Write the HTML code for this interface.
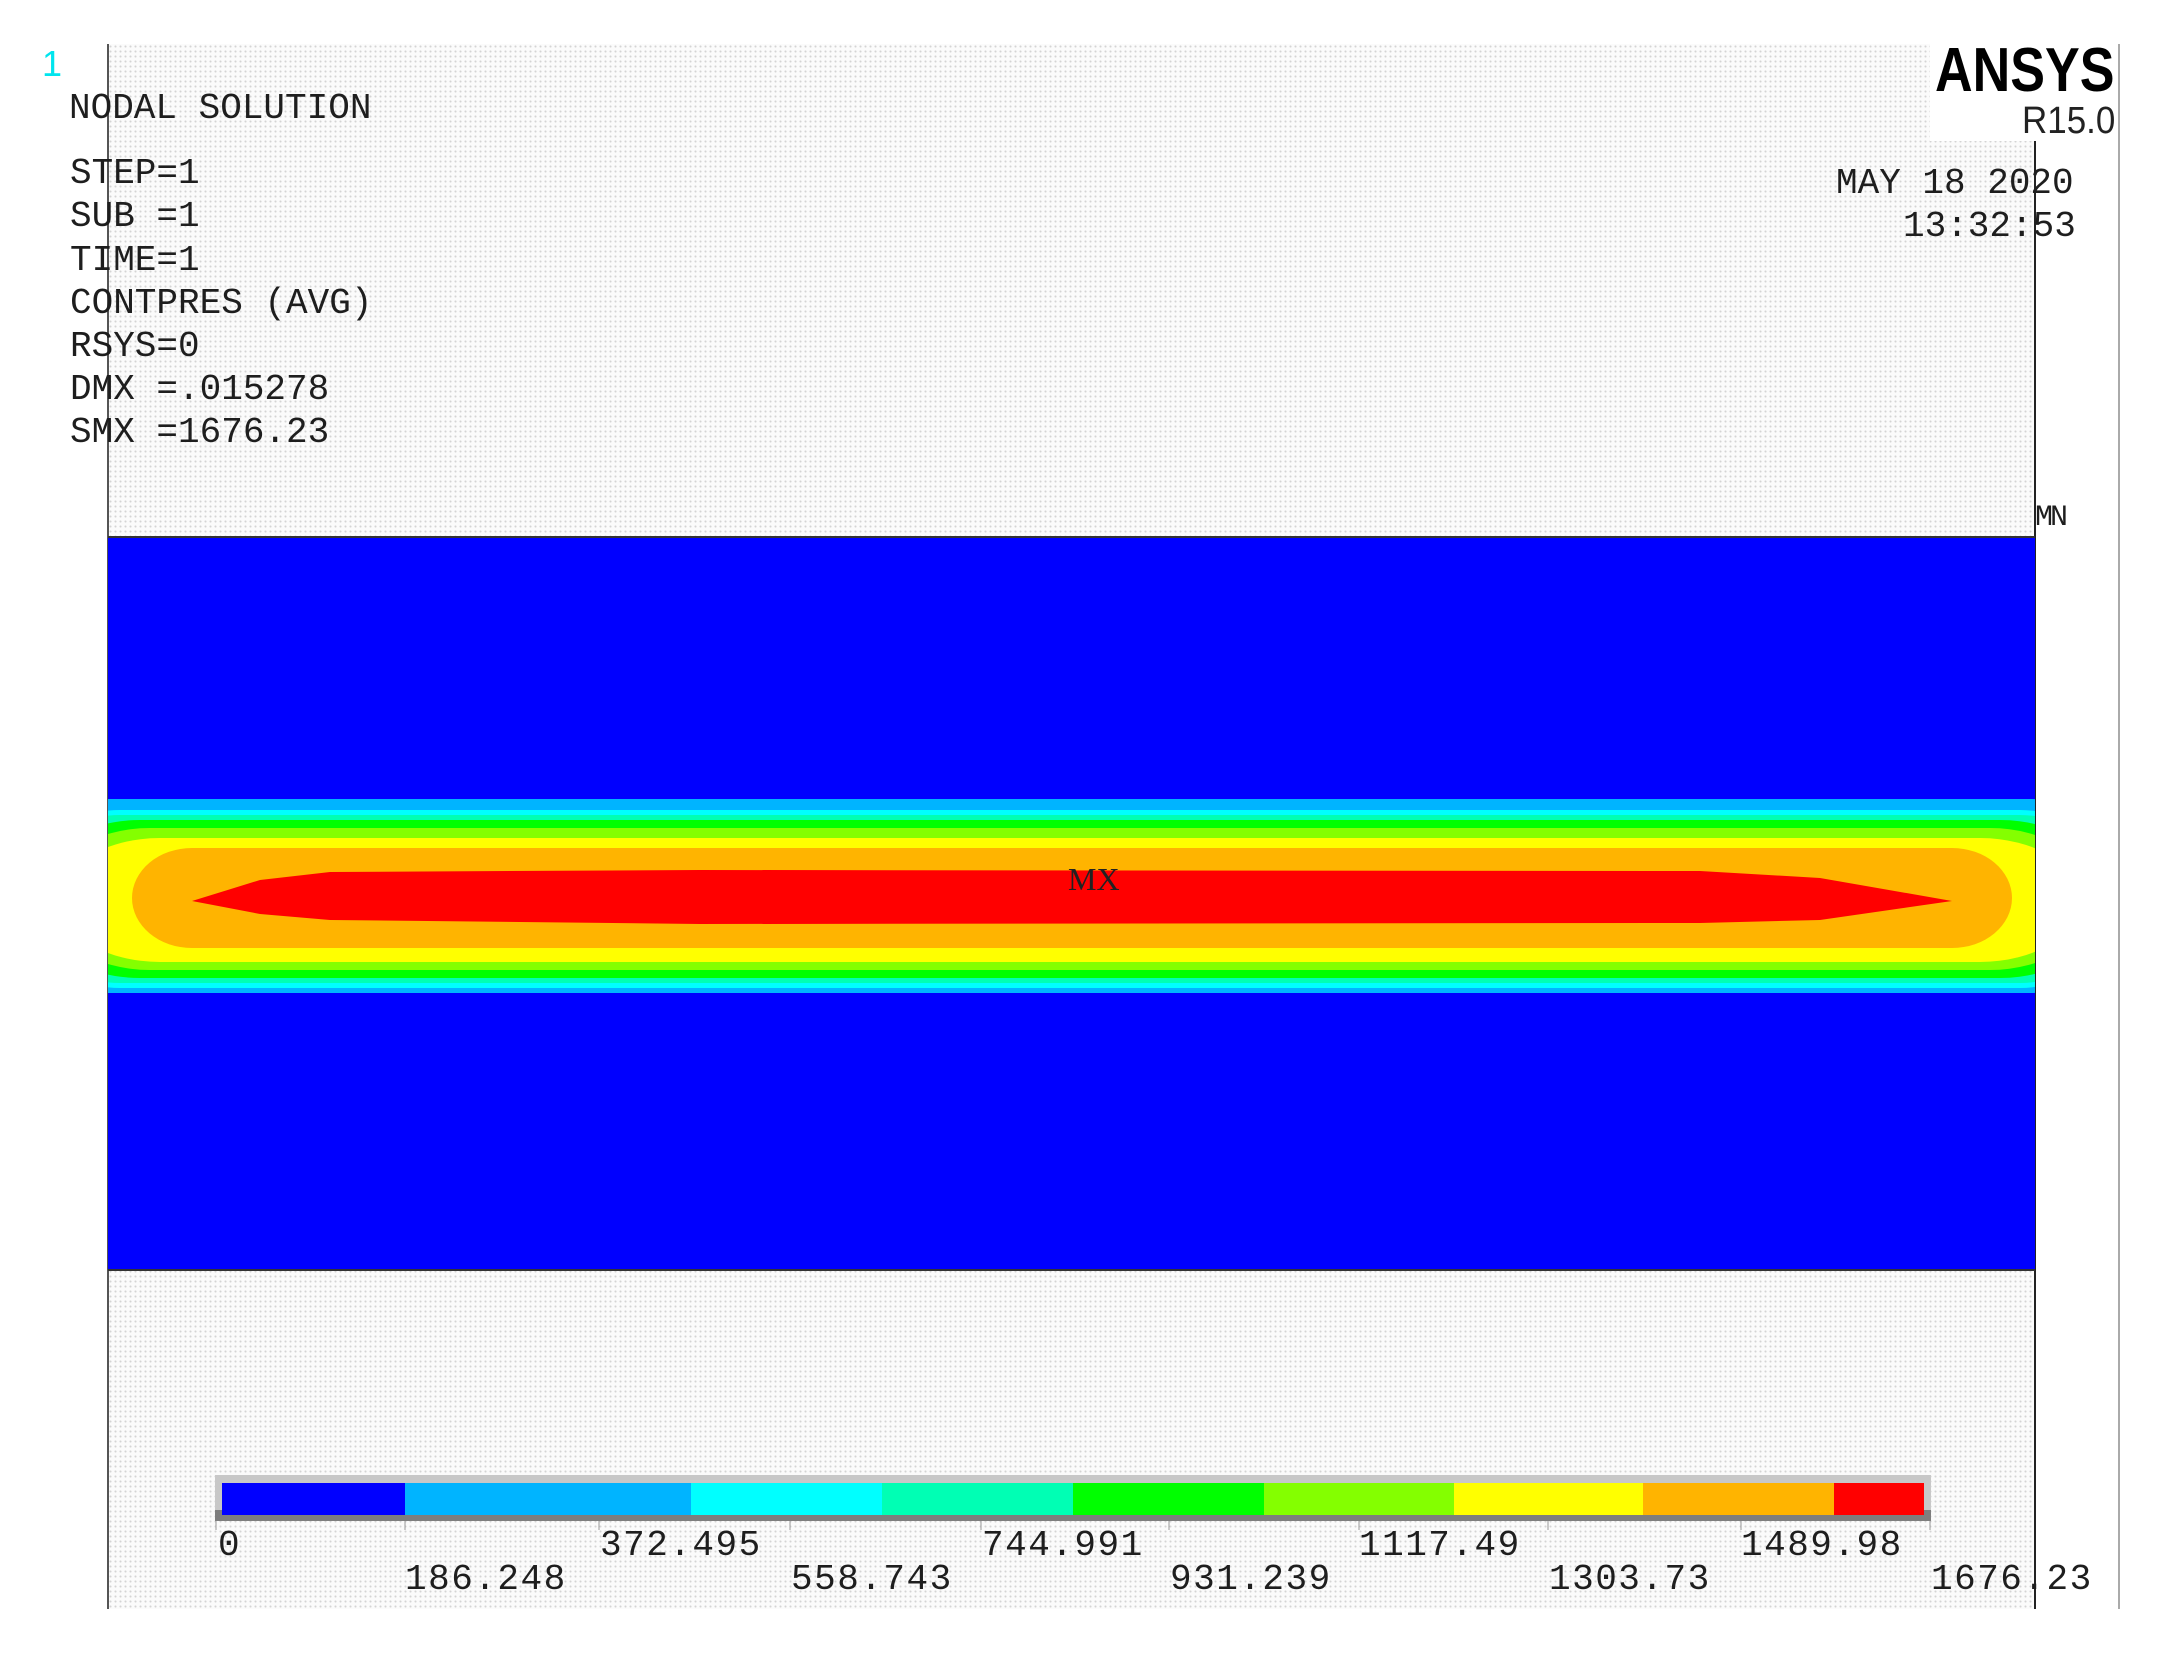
<!DOCTYPE html>
<html><head><meta charset="utf-8"><style>
html,body{margin:0;padding:0;background:#fff;}
body{width:2174px;height:1659px;position:relative;overflow:hidden;font-family:"Liberation Mono",monospace;}
.bg{position:absolute;left:108px;top:44px;width:1927px;height:1565px;background-color:#fbfbfb;background-image:radial-gradient(circle,#d4d4d4 0.9px,transparent 1.2px);background-size:5px 5px;}
.t{position:absolute;font-size:36px;line-height:36px;color:#1e1e1e;white-space:pre;}
.lg{position:absolute;font-size:36px;line-height:36px;color:#1e1e1e;white-space:pre;letter-spacing:1.5px;}
</style></head><body>
<div class="bg"></div>
<div style="position:absolute;left:1930px;top:40px;width:106px;height:101px;background:#fff"></div>
<div style="position:absolute;left:107px;top:44px;width:2px;height:1565px;background:#555"></div>
<div style="position:absolute;left:2034px;top:141px;width:2px;height:1468px;background:#222"></div>
<div style="position:absolute;left:2118px;top:44px;width:2px;height:1565px;background:#aaa"></div>

<svg style="position:absolute;left:0;top:0" width="2174" height="1659">
<defs><clipPath id="c"><rect x="108" y="537" width="1927" height="733"/></clipPath></defs>
<rect x="108" y="537" width="1927" height="733" fill="#0000ff"/>
<line x1="108" y1="537" x2="2035" y2="537" stroke="#333" stroke-width="2"/>
<line x1="108" y1="1270" x2="2035" y2="1270" stroke="#333" stroke-width="2"/>
<g clip-path="url(#c)">
<rect x="40" y="799" width="2060" height="194" rx="70" ry="60" fill="#00b4ff"/>
<rect x="40" y="810" width="2060" height="178" rx="80" ry="60" fill="#00ffff"/>
<rect x="40" y="815" width="2060" height="168" rx="80" ry="60" fill="#00ffb4"/>
<rect x="40" y="820" width="2060" height="158" rx="100" ry="65" fill="#00ff00"/>
<rect x="50" y="828" width="2040" height="142" rx="100" ry="65" fill="#84ff00"/>
<rect x="60" y="838" width="2020" height="124" rx="100" ry="62" fill="#ffff00"/>
<rect x="132" y="848" width="1880" height="100" rx="60" ry="50" fill="#ffb400"/>
<path d="M192,901 L260,880 L330,872 L700,870 L1700,871 L1820,878 L1952,901 L1820,920 L1700,923 L700,924 L330,920 L260,914 Z" fill="#ff0000"/>
</g>
<text x="1068" y="890" font-family="Liberation Serif, serif" font-size="32" fill="#222">MX</text>
<!-- legend -->
<rect x="215" y="1475" width="1716" height="46" fill="#c8c8c8"/>
<rect x="215" y="1510" width="1716" height="11" fill="#7e7e7e"/>
<rect x="222" y="1483" width="183" height="32" fill="#0000ff"/>
<rect x="405" y="1483" width="286" height="32" fill="#00b4ff"/>
<rect x="691" y="1483" width="191" height="32" fill="#00ffff"/>
<rect x="882" y="1483" width="191" height="32" fill="#00ffb4"/>
<rect x="1073" y="1483" width="191" height="32" fill="#00ff00"/>
<rect x="1264" y="1483" width="190" height="32" fill="#84ff00"/>
<rect x="1454" y="1483" width="189" height="32" fill="#ffff00"/>
<rect x="1643" y="1483" width="191" height="32" fill="#ffb400"/>
<rect x="1834" y="1483" width="90" height="32" fill="#ff0000"/>
<g stroke="#999" stroke-width="1">
<line x1="216" y1="1521" x2="216" y2="1530"/><line x1="405" y1="1521" x2="405" y2="1530"/><line x1="599" y1="1521" x2="599" y2="1530"/><line x1="790" y1="1521" x2="790" y2="1530"/><line x1="981" y1="1521" x2="981" y2="1530"/><line x1="1169" y1="1521" x2="1169" y2="1530"/><line x1="1359" y1="1521" x2="1359" y2="1530"/><line x1="1548" y1="1521" x2="1548" y2="1530"/><line x1="1741" y1="1521" x2="1741" y2="1530"/><line x1="1930" y1="1521" x2="1930" y2="1530"/>
</g>
</svg>

<div style="position:absolute;left:42px;top:46px;font-family:'Liberation Sans',sans-serif;font-size:36px;line-height:36px;color:#00e5ee">1</div>
<div class="t" style="left:69px;top:91px">NODAL SOLUTION</div>
<div class="t" style="left:70px;top:156px">STEP=1</div>
<div class="t" style="left:70px;top:199px">SUB =1</div>
<div class="t" style="left:70px;top:243px">TIME=1</div>
<div class="t" style="left:70px;top:286px">CONTPRES (AVG)</div>
<div class="t" style="left:70px;top:329px">RSYS=0</div>
<div class="t" style="left:70px;top:372px">DMX =.015278</div>
<div class="t" style="left:70px;top:415px">SMX =1676.23</div>

<div style="position:absolute;left:1935px;top:40px;white-space:nowrap;font-family:'Liberation Sans',sans-serif;font-weight:bold;font-size:62px;line-height:62px;color:#000;transform:scaleX(0.84);transform-origin:left top">ANSYS</div>
<div style="position:absolute;left:2022px;top:102px;white-space:nowrap;font-family:'Liberation Sans',sans-serif;font-size:38px;line-height:38px;color:#222;transform:scaleX(0.92);transform-origin:left top">R15.0</div>

<div class="t" style="left:1836px;top:166px">MAY 18 2020</div>
<div class="t" style="left:1903px;top:209px">13:32:53</div>
<div class="t" style="left:2035px;top:500px;font-size:30px;letter-spacing:-3px">MN</div>

<div class="lg" style="left:218px;top:1528px">0</div>
<div class="lg" style="left:600px;top:1528px">372.495</div>
<div class="lg" style="left:982px;top:1528px">744.991</div>
<div class="lg" style="left:1359px;top:1528px">1117.49</div>
<div class="lg" style="left:1741px;top:1528px">1489.98</div>
<div class="lg" style="left:405px;top:1562px">186.248</div>
<div class="lg" style="left:791px;top:1562px">558.743</div>
<div class="lg" style="left:1170px;top:1562px">931.239</div>
<div class="lg" style="left:1549px;top:1562px">1303.73</div>
<div class="lg" style="left:1931px;top:1562px">1676.23</div>
</body></html>
